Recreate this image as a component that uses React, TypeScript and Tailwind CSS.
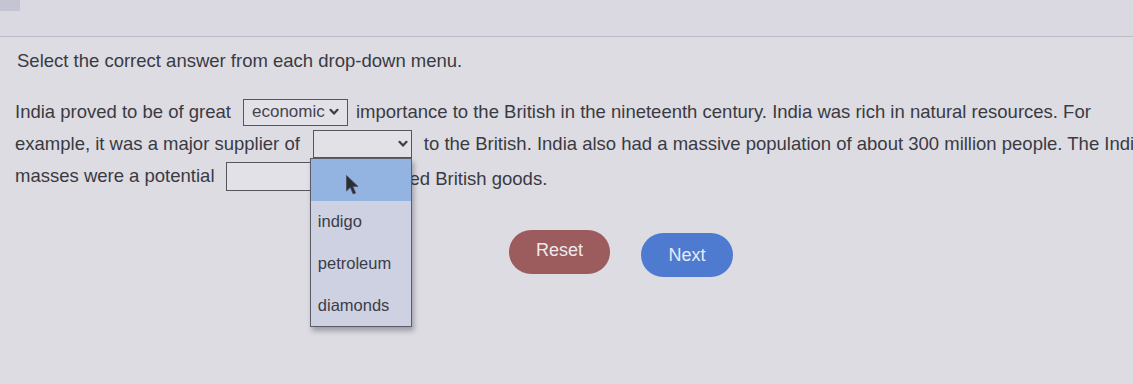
import React from 'react'

const Chevron = () => (
  <svg width="10" height="8" viewBox="0 0 10 8" className="shrink-0">
    <polyline points="1.5,1.8 5,5.6 8.5,1.8" fill="none" stroke="#3d3d48" strokeWidth="2.2" strokeLinecap="round" strokeLinejoin="round" />
  </svg>
)

const Cursor = () => (
  <svg width="16" height="22" viewBox="0 0 16 22" className="absolute left-[34px] top-[15px]">
    <path d="M1.5 1.5 L1.5 17 L5.3 13.3 L8.2 20 L10.6 19 L7.8 12.4 L13 12.4 Z" fill="#2b2d36" stroke="#4a4c58" strokeWidth="0.8" />
  </svg>
)

export default function App() {
  const options = ['indigo', 'petroleum', 'diamonds']

  return (
    <div className="relative w-[1133px] h-[384px] overflow-hidden bg-[#dddce3] font-['Liberation_Sans',Arial,sans-serif] text-[#3a3a42]">
      {/* top strip */}
      <div className="h-[37px] bg-[#dad8e1] border-b border-[#bcbbc6]">
        <div className="w-[20px] h-[11px] bg-[#c4c4d3]" />
      </div>

      <div className="pl-[17px] pt-[13px] text-[18.5px] leading-[22px] whitespace-nowrap">
        Select the correct answer from each drop-down menu.
      </div>

      {/* paragraph */}
      <div className="pl-[15px] pt-[24px] text-[18.5px] whitespace-nowrap">
        <div className="flex items-center h-[32px]">
          <span className="shrink-0">India proved to be of great</span>
          <div className="shrink-0 ml-[12px] w-[105px] h-[27px] border border-[#55555f] bg-[#e2e1e8] flex items-center justify-between px-[8px] text-[17px]">
            <span className="text-[#44444e]">economic</span>
            <Chevron />
          </div>
          <span className="shrink-0 ml-[8px]">importance to the British in the nineteenth century. India was rich in natural resources. For</span>
        </div>

        <div className="flex items-center h-[32px]">
          <span className="shrink-0">example, it was a major supplier of</span>
          <div className="shrink-0 relative ml-[13px] w-[99px] h-[28px] border border-[#55555f] bg-[#e2e1e8] flex items-center justify-end pr-[3px]">
            <Chevron />
            {/* open list */}
            <div className="absolute left-[-4px] top-[27px] w-[102px] h-[169px] bg-[#cdd1e2] border border-[#5b5c68] shadow-[2px_4px_5px_rgba(40,40,60,0.35)] z-10 flex flex-col">
              <div className="relative h-[42px] bg-[#93b4e1]">
                <Cursor />
              </div>
              {options.map((o) => (
                <div key={o} className="h-[42px] flex items-center pl-[7px] text-[16.5px] text-[#3c3d48]">
                  {o}
                </div>
              ))}
            </div>
          </div>
          <span className="shrink-0 ml-[12px]">to the British. India also had a massive population of about 300 million people. The Indian</span>
        </div>

        <div className="flex items-center h-[32px]">
          <span className="shrink-0">masses were a potential</span>
          <div className="shrink-0 ml-[11px] w-[186px] h-[29px] border border-[#55555f] bg-[#e2e1e8]" />
          <span className="shrink-0 ml-[-2px] mt-[6px]">ed British goods.</span>
        </div>
      </div>

      {/* buttons */}
      <div className="flex items-start pl-[509px] pt-[38px] gap-[31px] text-[18px]">
        <button className="w-[101px] h-[44px] rounded-full bg-[#9c5b5d] text-[#eceaee] flex items-center justify-center pb-[3px]">
          Reset
        </button>
        <button className="mt-[3px] w-[92px] h-[44px] rounded-full bg-[#4e7ad0] text-[#e8ebf4] flex items-center justify-center">
          Next
        </button>
      </div>
    </div>
  )
}
